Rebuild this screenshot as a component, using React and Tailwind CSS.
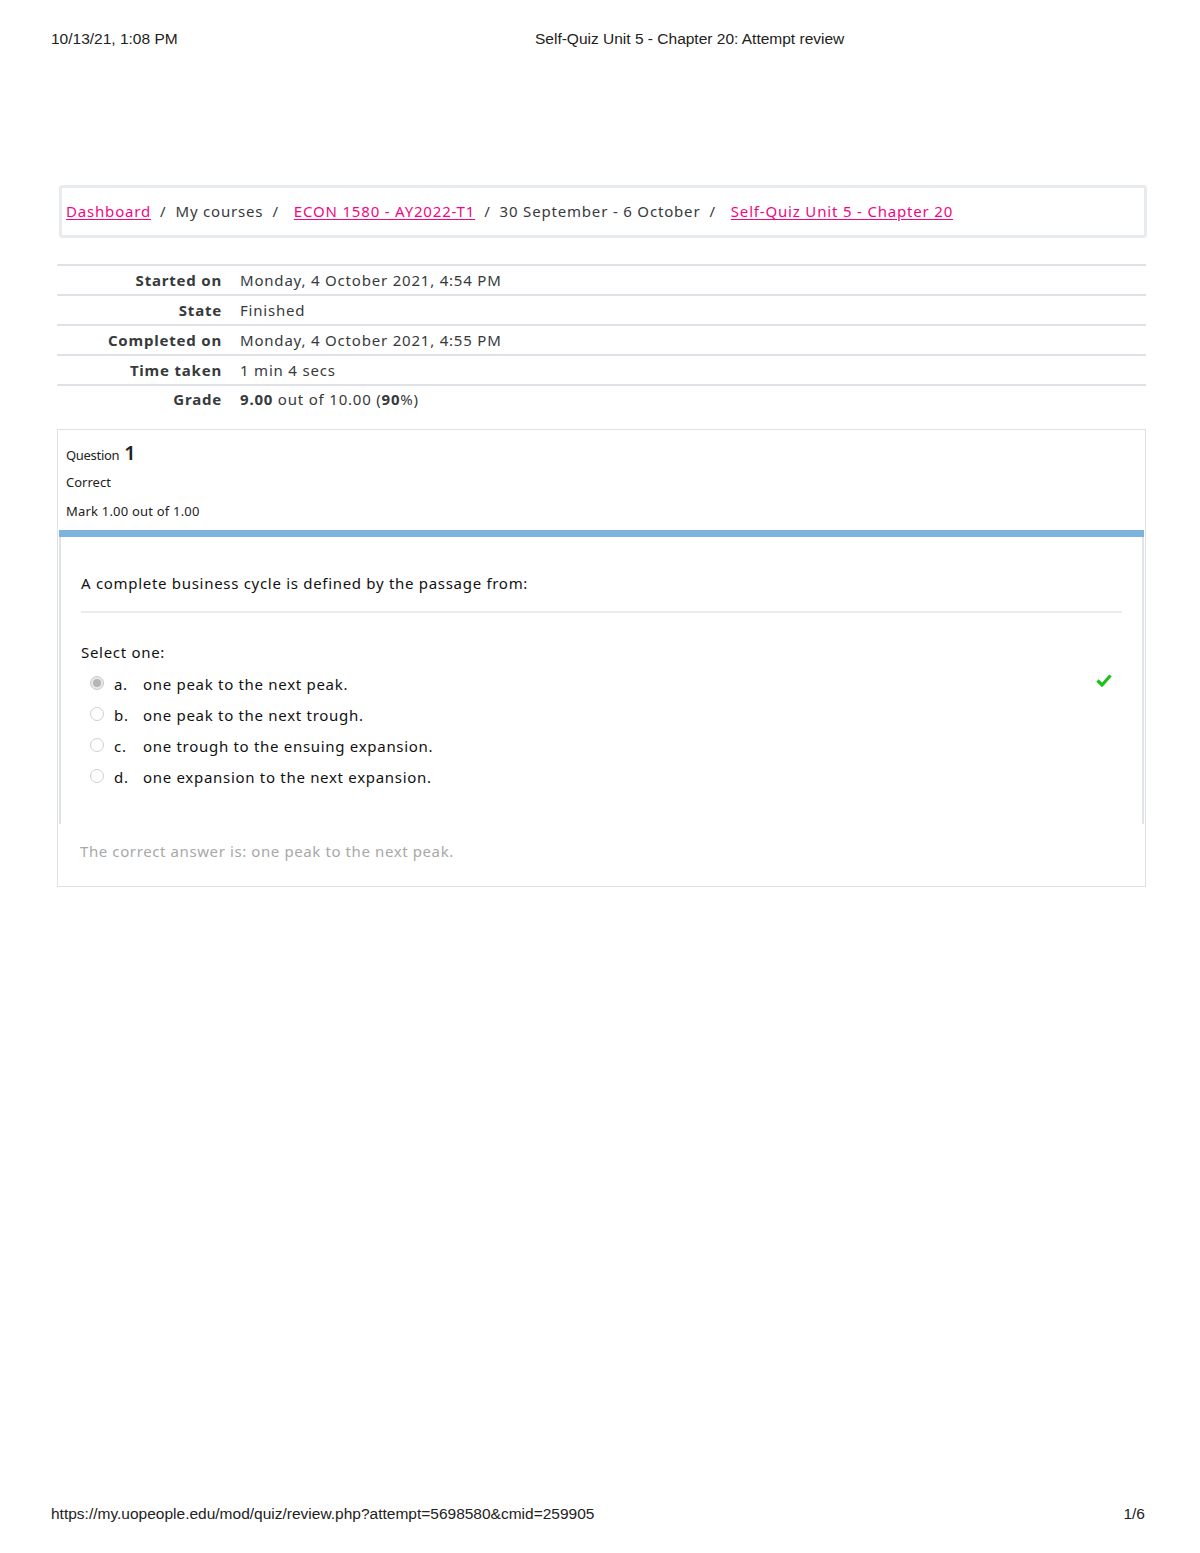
import React from 'react'

const sans = { fontFamily: '"Noto Sans", "Open Sans", sans-serif' }
const print = { fontFamily: '"Liberation Sans", Arial, sans-serif' }

const Crumb = ({ children }) => (
  <a href="#" className="text-[#f0077f] underline underline-offset-2 decoration-[#f0077f]">
    {children}
  </a>
)

const Sep = () => <span className="mx-[9px] text-[#373a3c]">/</span>

const rows = [
  ['Started on', 'Monday, 4 October 2021, 4:54 PM'],
  ['State', 'Finished'],
  ['Completed on', 'Monday, 4 October 2021, 4:55 PM'],
  ['Time taken', '1 min 4 secs'],
]

const options = [
  ['a.', 'one peak to the next peak.', true],
  ['b.', 'one peak to the next trough.', false],
  ['c.', 'one trough to the ensuing expansion.', false],
  ['d.', 'one expansion to the next expansion.', false],
]

const Radio = ({ checked }) => (
  <span
    className={
      'inline-block w-[14px] h-[14px] rounded-full border ' +
      (checked ? 'border-[#c8c8c8] bg-[#e8e8e8]' : 'border-[#cfcfcf] bg-white')
    }
  >
    {checked && <span className="block w-[8px] h-[8px] m-[2px] rounded-full bg-[#b5b5b5]" />}
  </span>
)

const App = () => {
  return (
    <div className="w-[1200px] h-[1553px] bg-white flex flex-col text-[#373a3c]">
      {/* print header */}
      <div className="flex pt-[31px] px-[51px] text-[15.5px] leading-[16px] text-[#222]" style={print}>
        <span className="w-[484px]">10/13/21, 1:08 PM</span>
        <span>Self-Quiz Unit 5 - Chapter 20: Attempt review</span>
      </div>

      <div className="flex-1" style={sans}>
        {/* breadcrumb */}
        <div className="mt-[138px] ml-[59px] w-[1088px] h-[53px] border-[3px] border-[#e9ecef] rounded-[3px] flex items-center pl-[4px] text-[15px] tracking-[0.82px]">
          <Crumb>Dashboard</Crumb>
          <Sep />
          <span>My courses</span>
          <Sep />
          <span className="ml-[6px]"><Crumb>ECON 1580 - AY2022-T1</Crumb></span>
          <Sep />
          <span>30 September - 6 October</span>
          <Sep />
          <span className="ml-[6px]"><Crumb>Self-Quiz Unit 5 - Chapter 20</Crumb></span>
        </div>

        {/* summary table */}
        <div className="mt-[26px] ml-[57px] w-[1089px] text-[15px] tracking-[0.8px]">
          {rows.map(([k, v]) => (
            <div key={k} className="flex h-[30px] items-center border-t-2 border-[#dee2e6]">
              <span className="w-[165px] text-right font-bold">{k}</span>
              <span className="pl-[18px]">{v}</span>
            </div>
          ))}
          <div className="flex h-[29px] items-center border-t-2 border-[#dee2e6]">
            <span className="w-[165px] text-right font-bold">Grade</span>
            <span className="pl-[18px]">
              <b>9.00</b> out of 10.00 (<b>90</b>%)
            </span>
          </div>
        </div>

        {/* question */}
        <div className="mt-[16px] ml-[57px] w-[1089px] h-[458px] border border-[#dee2e6] flex flex-col">
          <div className="pl-[8px] pt-[12px] h-[100px] text-[13px] text-[#222]">
            <div className="flex items-baseline h-[22px]">
              <span className="tracking-[-0.3px]">Question</span>
              <span className="ml-[5px] text-[20px] font-semibold leading-[22px]">1</span>
            </div>
            <div className="mt-[9px] h-[22px]">Correct</div>
            <div className="mt-[7px] tracking-[0.2px]">Mark 1.00 out of 1.00</div>
          </div>
          <div className="mx-[1px] h-[7px] bg-[#7db4dd]" />
          <div className="mx-[1px] h-[287px] border-x-2 border-[#e1e5ea] px-[20px] pt-[35px] text-[#111] tracking-[0.7px]">
            <div className="text-[15px] pb-[16px] border-b-2 border-[#e9ecef]">
              A complete business cycle is defined by the passage from:
            </div>
            <div className="mt-[28px] text-[15px]">Select one:</div>
            <div className="mt-[6px] flex">
              <div className="flex-1">
                {options.map(([l, t, c]) => (
                  <div key={l} className="flex items-center h-[31px] text-[15px]">
                    <span className="ml-[9px] -mt-[4px] flex"><Radio checked={c} /></span>
                    <span className="ml-[10px] w-[29px]">{l}</span>
                    <span>{t}</span>
                  </div>
                ))}
              </div>
              <div className="pr-[10px] pt-[4px]">
                <svg width="16" height="14" viewBox="0 0 16 14">
                  <path d="M1.5 7.5 L6 12 L14.5 2.5" fill="none" stroke="#18c418" strokeWidth="3.2" strokeLinejoin="miter" />
                </svg>
              </div>
            </div>
          </div>
          <div className="px-[22px] pt-[16px] text-[15px] text-[#a8a8a8] tracking-[0.6px]">
            The correct answer is: one peak to the next peak.
          </div>
        </div>
      </div>

      {/* print footer */}
      <div className="flex justify-between px-[51px] pb-[31px] text-[15.5px] leading-[16px] text-[#222]" style={print}>
        <span>https://my.uopeople.edu/mod/quiz/review.php?attempt=5698580&amp;cmid=259905</span>
        <span className="pr-[4px]">1/6</span>
      </div>
    </div>
  )
}

export default App
